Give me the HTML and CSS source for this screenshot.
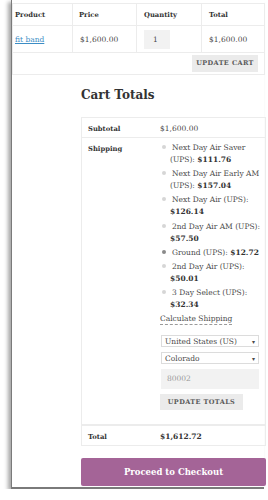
FILE: index.html
```html
<!DOCTYPE html>
<html lang="en">

<head>
    <meta charset="UTF-8">
    <meta name="viewport" content="width=device-width, initial-scale=1.0">
    <title>Cart</title>
    <link rel="stylesheet" href="styles.css">
</head>

<body>

    <div class="shot">
        <table class="cart">
            <tr>
                <th class="c-product">Product</th>
                <th class="c-price">Price</th>
                <th class="c-qty">Quantity</th>
                <th class="c-total">Total</th>
            </tr>
            <tr class="item">
                <td><a href="#">fit band</a></td>
                <td>$1,600.00</td>
                <td><div class="qty">1</div></td>
                <td>$1,600.00</td>
            </tr>
            <tr class="actions">
                <td colspan="4"><span class="btn btn-cart">Update Cart</span></td>
            </tr>
        </table>

        <div class="collaterals">
            <h2>Cart Totals</h2>
            <table class="totals">
                <tr class="subtotal">
                    <th>Subtotal</th>
                    <td>$1,600.00</td>
                </tr>
                <tr class="shipping">
                    <th>Shipping</th>
                    <td>
                        <ul class="methods">
                            <li><span class="radio"></span><span>Next Day Air Saver</span> <span>(UPS): <b>$111.76</b></span></li>
                            <li><span class="radio"></span><span>Next Day Air Early AM</span> <span>(UPS): <b>$157.04</b></span></li>
                            <li><span class="radio"></span>Next Day Air (UPS): <b>$126.14</b></li>
                            <li><span class="radio"></span>2nd Day Air AM (UPS): <b>$57.50</b></li>
                            <li><span class="radio checked"></span>Ground (UPS): <b>$12.72</b></li>
                            <li><span class="radio"></span>2nd Day Air (UPS): <b>$50.01</b></li>
                            <li><span class="radio"></span>3 Day Select (UPS): <b>$32.34</b></li>
                        </ul>
                        <a class="calc" href="#">Calculate Shipping</a>
                        <div class="calc-form">
                            <div class="select"><span>United States (US)</span><span class="arrow">▾</span></div>
                            <div class="select"><span>Colorado</span><span class="arrow">▾</span></div>
                            <div class="postcode">80002</div>
                            <span class="btn btn-totals">Update Totals</span>
                        </div>
                    </td>
                </tr>
                <tr class="order-total">
                    <th>Total</th>
                    <td><b>$1,612.72</b></td>
                </tr>
            </table>
            <a class="checkout" href="#">Proceed to Checkout</a>
        </div>
    </div>

</body>

</html>
```

FILE: styles.css
```css
body {
    font-family: "DejaVu Serif", serif;
    font-size: 7.5px;
    color: #4a4a4a;
    background-color: #ffffff;
    margin: 0;
    overflow: hidden;
}

.shot {
    margin-left: 11px;
    width: 253px;
    height: 489px;
    padding-top: 3px;
    box-sizing: border-box;
    border-left: 1px solid #7a7a7a;
    border-bottom: 2px solid #7a7a7a;
    box-shadow: -3px 2px 4px rgba(0, 0, 0, 0.35);
}

table {
    border-collapse: collapse;
}

.cart {
    width: 253px;
    border: 1px solid #ececec;
}

.cart th,
.cart td {
    border: 1px solid #ececec;
    padding: 0 0 0 7px;
    text-align: left;
}

.cart th {
    height: 21px;
    font-weight: bold;
    color: #333;
    font-size: 6.8px;
}

.cart .c-product {
    width: 57px;
    padding-left: 2px;
}

.cart .c-price {
    width: 57px;
    padding-left: 6px;
}

.cart .c-qty {
    width: 57px;
}

.item td {
    height: 26px;
}

.item td:first-child {
    padding-left: 2px;
}

.item a {
    color: #3c8dc5;
    text-decoration: underline;
}

.qty {
    width: 26px;
    height: 19px;
    line-height: 19px;
    background-color: #f2f2f2;
    padding-left: 9px;
    box-sizing: border-box;
}

.actions td {
    height: 21px;
    text-align: right;
    padding-right: 6px;
}

.btn {
    display: inline-block;
    background-color: #ebebeb;
    color: #5a5a5a;
    font-weight: bold;
    text-transform: uppercase;
    letter-spacing: 0.4px;
    text-align: center;
    font-size: 6.5px;
}

.btn-cart {
    width: 66px;
    height: 17px;
    line-height: 17px;
}

.collaterals {
    margin-left: 69px;
    width: 185px;
}

h2 {
    font-size: 12px;
    color: #333;
    margin: 12px 0 14px;
    line-height: 16px;
}

.totals {
    width: 185px;
    border: 1px solid #ececec;
}

.totals th,
.totals td {
    text-align: left;
    vertical-align: top;
    padding: 5px 0 0 6px;
}

.totals th {
    width: 66px;
    font-weight: bold;
    color: #333;
    font-size: 6.8px;
    line-height: 12px;
}

.totals td {
    line-height: 12px;
}

.shipping td {
    padding-top: 4px;
}

.subtotal th,
.subtotal td {
    height: 14px;
    border-bottom: 1px solid #ececec;
}

.methods {
    list-style: none;
    margin: 0 0 0 2px;
    padding: 0;
}

.methods li {
    padding-left: 8px;
    text-indent: -8px;
    margin-bottom: 2.2px;
}

.methods b {
    color: #333;
}

.radio {
    display: inline-block;
    width: 4px;
    height: 4px;
    border-radius: 50%;
    background-color: #d6d6d6;
    margin-right: 6px;
    vertical-align: 1px;
}

.radio.checked {
    background-color: #8a8a8a;
}

.calc {
    display: inline-block;
    color: #4a4a4a;
    text-decoration: none;
    border-bottom: 1px dashed #9a9a9a;
    line-height: 11px;
    margin-top: -1px;
}

.calc-form {
    padding: 10px 0 14px 1px;
}

.select {
    width: 98px;
    height: 12px;
    line-height: 12px;
    border: 1px solid #dcdcdc;
    box-sizing: border-box;
    display: flex;
    justify-content: space-between;
    padding: 0 3px;
    margin-bottom: 5px;
}

.arrow {
    font-size: 6px;
}

.postcode {
    width: 98px;
    height: 20px;
    line-height: 20px;
    background-color: #f2f2f2;
    color: #9a9a9a;
    padding-left: 6px;
    box-sizing: border-box;
    margin-bottom: 5px;
}

.btn-totals {
    width: 83px;
    height: 16px;
    line-height: 16px;
    margin-left: -1px;
}

.order-total th,
.order-total td {
    border-top: 2px solid #ececec;
    height: 14px;
}

.order-total b {
    color: #333;
}

.checkout {
    display: block;
    margin-top: 12px;
    height: 28px;
    line-height: 28px;
    background-color: #a46497;
    color: #ffffff;
    text-align: center;
    font-weight: bold;
    font-size: 8.5px;
    text-decoration: none;
    border-radius: 2px;
}
```
